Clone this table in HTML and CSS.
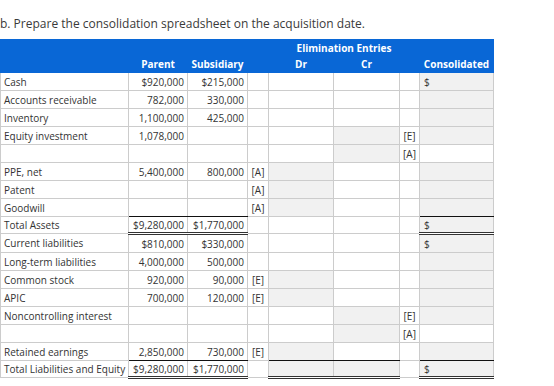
FILE: index.html
```html
<!DOCTYPE html>
<html>
<head>
<meta charset="utf-8">
<link rel="stylesheet" href="styles.css">
</head>
<body>
<p class="title">b. Prepare the consolidation spreadsheet on the acquisition date.</p>
<table class="sheet">
  <colgroup>
    <col class="c-label"><col class="c-par"><col class="c-sub"><col class="c-n1"><col class="c-dr"><col class="c-cr"><col class="c-n2"><col class="c-con">
  </colgroup>
  <thead>
    <tr class="h1">
      <th></th><th></th><th></th><th></th>
      <th colspan="3" class="elim">Elimination Entries</th>
      <th></th>
    </tr>
    <tr class="h2">
      <th></th><th>Parent</th><th>Subsidiary</th><th></th><th>Dr</th><th>Cr</th><th></th><th>Consolidated</th>
    </tr>
  </thead>
  <tbody>
    <tr><td class="lbl">Cash</td><td class="num">$920,000</td><td class="num">$215,000</td><td class="tag"></td><td></td><td></td><td class="tag"></td><td class="in">$</td></tr>
    <tr><td class="lbl">Accounts receivable</td><td class="num">782,000</td><td class="num">330,000</td><td class="tag"></td><td></td><td></td><td class="tag"></td><td class="in"></td></tr>
    <tr><td class="lbl">Inventory</td><td class="num">1,100,000</td><td class="num">425,000</td><td class="tag"></td><td></td><td></td><td class="tag"></td><td class="in"></td></tr>
    <tr><td class="lbl">Equity investment</td><td class="num">1,078,000</td><td class="num"></td><td class="tag"></td><td></td><td class="in"></td><td class="tag">[E]</td><td class="in"></td></tr>
    <tr><td class="lbl"></td><td class="num"></td><td class="num"></td><td class="tag"></td><td></td><td class="in"></td><td class="tag">[A]</td><td></td></tr>
    <tr><td class="lbl">PPE, net</td><td class="num">5,400,000</td><td class="num">800,000</td><td class="tag">[A]</td><td class="in"></td><td></td><td class="tag"></td><td class="in"></td></tr>
    <tr><td class="lbl">Patent</td><td class="num"></td><td class="num"></td><td class="tag">[A]</td><td class="in"></td><td></td><td class="tag"></td><td class="in"></td></tr>
    <tr><td class="lbl">Goodwill</td><td class="num bb"></td><td class="num bb"></td><td class="tag">[A]</td><td class="in"></td><td></td><td class="tag"></td><td class="in bb"></td></tr>
    <tr class="total"><td class="lbl">Total Assets</td><td class="num bd">$9,280,000</td><td class="num bd">$1,770,000</td><td class="tag"></td><td></td><td></td><td class="tag"></td><td class="in bd">$</td></tr>
    <tr><td class="lbl">Current liabilities</td><td class="num">$810,000</td><td class="num">$330,000</td><td class="tag"></td><td></td><td></td><td class="tag"></td><td class="in">$</td></tr>
    <tr><td class="lbl">Long-term liabilities</td><td class="num">4,000,000</td><td class="num">500,000</td><td class="tag"></td><td></td><td></td><td class="tag"></td><td class="in"></td></tr>
    <tr><td class="lbl">Common stock</td><td class="num">920,000</td><td class="num">90,000</td><td class="tag">[E]</td><td class="in"></td><td></td><td class="tag"></td><td class="in"></td></tr>
    <tr><td class="lbl">APIC</td><td class="num">700,000</td><td class="num">120,000</td><td class="tag">[E]</td><td class="in"></td><td></td><td class="tag"></td><td class="in"></td></tr>
    <tr><td class="lbl">Noncontrolling interest</td><td class="num"></td><td class="num"></td><td class="tag"></td><td></td><td class="in"></td><td class="tag">[E]</td><td class="in"></td></tr>
    <tr><td class="lbl"></td><td class="num"></td><td class="num"></td><td class="tag"></td><td></td><td class="in"></td><td class="tag">[A]</td><td></td></tr>
    <tr><td class="lbl">Retained earnings</td><td class="num bb">2,850,000</td><td class="num bb">730,000</td><td class="tag">[E]</td><td class="in bb"></td><td class="bb"></td><td class="tag"></td><td class="in bb"></td></tr>
    <tr class="total"><td class="lbl">Total Liabilities and Equity</td><td class="num bd">$9,280,000</td><td class="num bd">$1,770,000</td><td class="tag"></td><td class="in bd"></td><td class="in bd"></td><td class="tag"></td><td class="in bd">$</td></tr>
  </tbody>
</table>
</body>
</html>
```

FILE: styles.css
```css
html, body {
  margin: 0;
  padding: 0;
  background: #ffffff;
}
body {
  font-family: "Open Sans", "Liberation Sans", sans-serif;
  color: #333333;
}
.title {
  margin: 0;
  padding-top: 16px;
  height: 16px;
  line-height: 16px;
  font-size: 12px;
  color: #3a3a3a;
  margin-bottom: 7px;
}
.sheet {
  border-collapse: collapse;
  table-layout: fixed;
  width: 494px;
  font-size: 10px;
}
.c-label { width: 128px; }
.c-par { width: 59px; }
.c-sub { width: 60px; }
.c-n1 { width: 21px; }
.c-dr { width: 65px; }
.c-cr { width: 66px; }
.c-n2 { width: 20px; }
.c-con { width: 74px; }

.sheet th {
  background: #0967d6;
  border: 1px solid #0967d6;
  color: #ffffff;
  font-weight: 700;
  font-size: 10px;
  padding: 0;
  text-align: center;
  white-space: nowrap;
}
.h1 th { height: 15px; }
.h2 th { height: 16px; }
.sheet td {
  border: 1px solid #cccccc;
  height: 17px;
  padding: 0 3px;
  white-space: nowrap;
  overflow: hidden;
}
.sheet tr.total td { height: 15px; }
.sheet td.lbl { padding-left: 3px; }
.sheet td.num { text-align: right; padding-right: 3px; }
.sheet td.tag { text-align: center; padding: 0; }
.sheet td.in { background: #f1f1f1; padding-left: 4px; }
.sheet td.bb { border-bottom: 1px solid #111111; }
.sheet td.bd { border-bottom: 3px double #333333; }
```
